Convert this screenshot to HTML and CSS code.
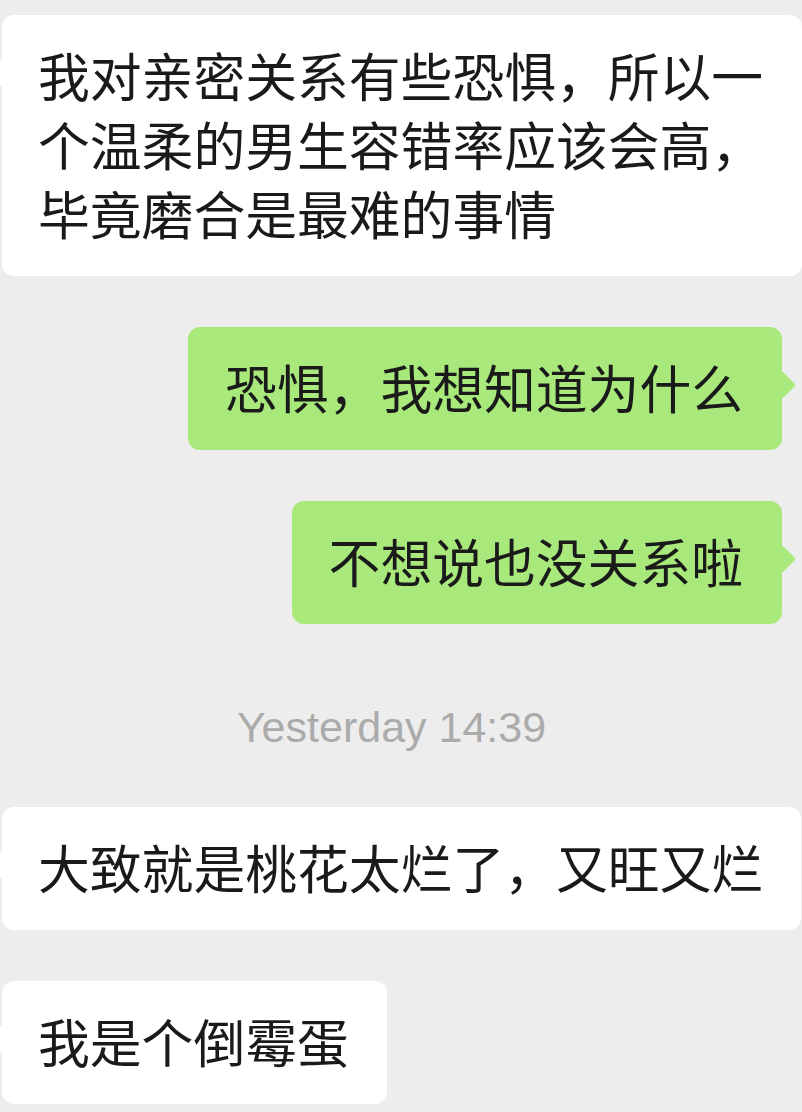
FILE: index.html
```html
<!DOCTYPE html>
<html lang="zh-CN">
<head>
<meta charset="utf-8">
<title>Chat</title>
<link rel="stylesheet" href="styles.css">
</head>
<body>
<div class="chat">
  <div class="row left">
    <div class="bubble white">我对亲密关系有些恐惧，所以一个温柔的男生容错率应该会高，毕竟磨合是最难的事情</div>
  </div>
  <div class="row right">
    <div class="bubble green">恐惧，我想知道为什么</div>
  </div>
  <div class="row right">
    <div class="bubble green">不想说也没关系啦</div>
  </div>
  <div class="time">Yesterday 14:39</div>
  <div class="row left">
    <div class="bubble white">大致就是桃花太烂了，又旺又烂</div>
  </div>
  <div class="row left">
    <div class="bubble white">我是个倒霉蛋</div>
  </div>
</div>
</body>
</html>
```
FILE: styles.css
```css
html, body {
  margin: 0;
  padding: 0;
  background: #ededed;
}

.chat {
  width: 802px;
  padding-top: 15px;
  display: flex;
  flex-direction: column;
  gap: 51px;
  overflow: hidden;
}

.row {
  display: flex;
}

.row.left {
  justify-content: flex-start;
  padding-left: 2px;
}

.row.right {
  justify-content: flex-end;
  padding-right: 20px;
}

.bubble {
  position: relative;
  font-family: "Noto Sans CJK SC", "PingFang SC", sans-serif;
  font-size: 51.8px;
  line-height: 69px;
  color: #1a1a1a;
  border-radius: 12px;
  padding-top: 25px;
  padding-bottom: 29px;
  box-sizing: border-box;
}

.bubble.white {
  background: #ffffff;
  max-width: 802px;
  padding-left: 36px;
  padding-right: 38px;
}

.bubble.green {
  background: #a9e97b;
  padding-left: 37px;
  padding-right: 39px;
}

.bubble::before {
  content: "";
  position: absolute;
  width: 20px;
  height: 20px;
  top: 48px;
  transform: rotate(45deg);
  border-radius: 3px;
  background: inherit;
}

.bubble.green::before {
  right: -10px;
}

.bubble.white::before {
  left: -10px;
}

.time {
  margin-top: 27px;
  margin-bottom: 4px;
  padding-right: 19px;
  text-align: center;
  font-family: "Liberation Sans", Arial, sans-serif;
  font-size: 43px;
  line-height: 50px;
  color: #ababab;
}
```
